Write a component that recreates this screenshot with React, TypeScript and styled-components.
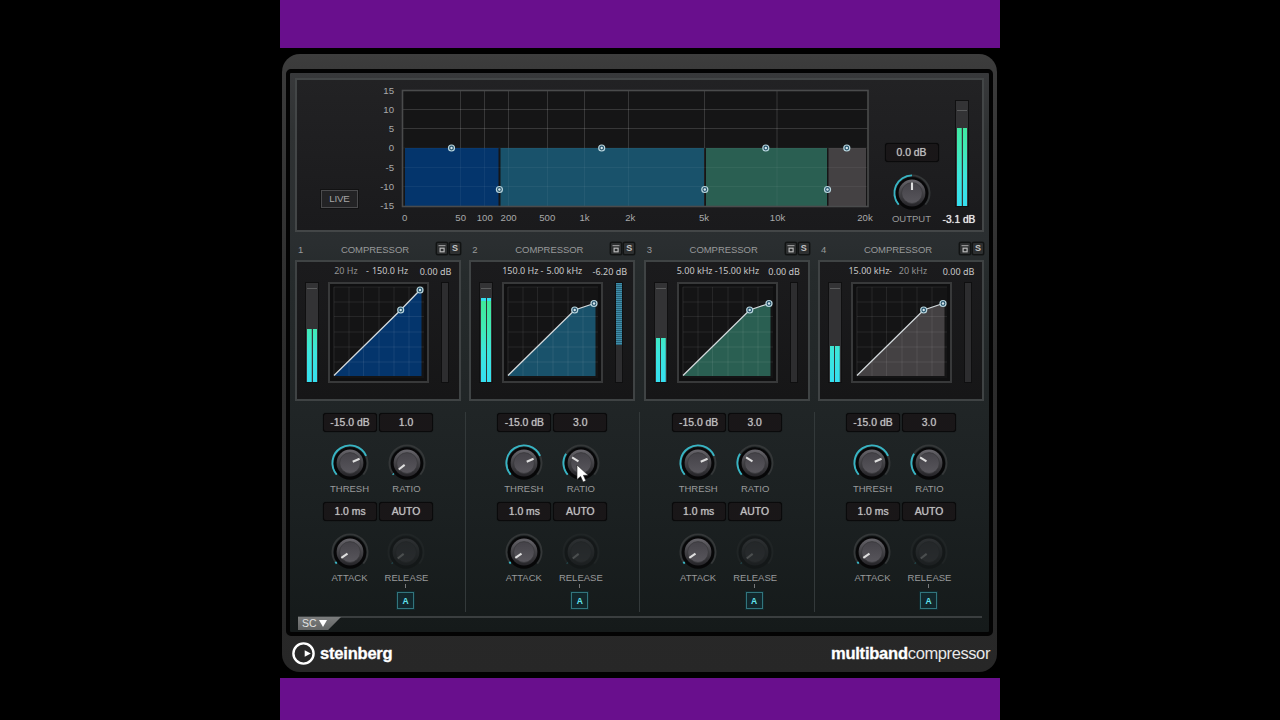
import React from "react";
import styled, { createGlobalStyle, css } from "styled-components";

const SANS = '"Liberation Sans", Arial, sans-serif';
const HUMANIST = '"Noto Sans", "Open Sans", sans-serif';

const GlobalStyle = createGlobalStyle`
  * { box-sizing: border-box; }
  html, body { margin: 0; background: #000; }
  body { font-family: ${SANS}; overflow: hidden; }
  svg { display: block; flex: none; }
`;

const Stage = styled.main`
  width: 1280px;
  height: 720px;
  background: #000;
  display: flex;
  justify-content: center;
`;

const Column = styled.div`
  width: 720px;
  height: 720px;
  display: flex;
  flex-direction: column;
  justify-content: space-between;
`;

const Stripe = styled.div<{ $height: number }>`
  height: ${(p) => p.$height}px;
  background: #690f8d;
`;

const Plugin = styled.section`
  width: 715px;
  height: 618px;
  margin: 0 0 0 2px;
  padding: 15px 4px 0;
  border-radius: 18px;
  background: linear-gradient(#3d3d3d 0, #3a3a3a 20px, #2c2c2c 300px, #272727 100%);
`;

const Face = styled.div`
  width: 707px;
  height: 567px;
  border: 4px solid #030303;
  border-radius: 5px;
  padding: 5px 5px 0;
  background: linear-gradient(#38393b 0, #2f3233 60px, #2a2e30 170px, #262b2c 200px, #202526 340px, #1b2021 440px, #151a1a 100%);
  display: flex;
  flex-direction: column;
`;

const Overview = styled.div`
  height: 154px;
  flex: none;
  border: 2px solid #434647;
  background: linear-gradient(#222224, #1a1a1c);
  display: flex;
`;

const LiveArea = styled.div`
  width: 76px;
  flex: none;
  padding: 108px 0 0 24px;
`;

const LiveButton = styled.button`
  width: 37px;
  height: 18px;
  padding: 0;
  border: 1px solid #4b4b4d;
  outline: 1px solid #121213;
  background: #232325;
  color: #a6a6a6;
  font: 9.8px/14px ${SANS};
  letter-spacing: -0.2px;
`;

const OutputArea = styled.div`
  width: 67px;
  flex: none;
  padding-top: 63px;
  display: flex;
  flex-direction: column;
  align-items: center;
`;

const OutputMeterArea = styled.div`
  width: 34px;
  flex: none;
  padding-top: 20px;
  display: flex;
  flex-direction: column;
  align-items: center;
`;

const OutputLevel = styled.div`
  margin: 6px 6px 0 0;
  font-size: 10.2px;
  line-height: 13px;
  color: #e6e6e6;
  text-shadow: 0 0 0.8px #fff;
  white-space: nowrap;
  width: 48px;
  text-align: center;
`;

const ValueBox = styled.div`
  width: 54px;
  height: 19px;
  border: 1px solid #0a0a0b;
  border-radius: 3px;
  box-shadow: 0 0 1px #000;
  background: radial-gradient(#1e1a1c 0.6px, transparent 0.9px) 0 0 / 2px 2px, #111112;
  color: #bebebe;
  font-size: 10.4px;
  line-height: 17px;
  text-align: center;
  white-space: nowrap;
  text-shadow: 0 0 0.8px #aaa;
`;

const Caption = styled.div`
  height: 13px;
  font-size: 9.5px;
  line-height: 13px;
  color: #999a9b;
  white-space: nowrap;
`;

const MeterTrack = styled.div<{ $height: number; $tick: number }>`
  width: 14px;
  height: ${(p) => p.$height}px;
  padding: 1px 1px 0;
  background: linear-gradient(#5a5b5c, #5a5b5c) 1px ${(p) => p.$tick}px / 10px 1px no-repeat, #333335;
  border: 1px solid #101011;
  display: flex;
  align-items: flex-end;
  gap: 1px;
`;

const MeterBar = styled.i<{ $level: number; $span: number }>`
  flex: 1;
  height: ${(p) => p.$level}px;
  background: linear-gradient(to top, #35dff0 0, #3ce6dc 30px, #40eab6 ${(p) => p.$span * 0.65}px, #3fe99a ${(p) => p.$span}px) bottom / 100% ${(p) => p.$span}px;
`;

const Bands = styled.div`
  display: grid;
  grid-template-columns: repeat(4, 166px);
  justify-content: space-between;
`;

const Band = styled.div`
  display: flex;
  flex-direction: column;
`;

const BandHeader = styled.header`
  height: 28px;
  padding-top: 10px;
  display: grid;
  grid-template-columns: 18px 124px 24px;
  color: #98999a;
  font-size: 9.5px;
  line-height: 15px;
`;

const BandNumber = styled.span`
  padding-left: 3px;
`;

const BandTitle = styled.span`
  text-align: center;
  letter-spacing: -0.05px;
`;

const BandButtons = styled.span`
  display: flex;
  gap: 1px;
  margin-left: -1px;
`;

const BandButton = styled.span`
  width: 12px;
  height: 13px;
  border: 1px solid #111313;
  border-radius: 2px;
  background: #2d2f30;
  box-shadow: 0 0 0 0.5px #151717;
  color: #c2c2c2;
  font: bold 9px/11px ${SANS};
  display: flex;
  align-items: center;
  justify-content: center;
`;

const BandPanel = styled.div`
  height: 141px;
  border: 2px solid #3f4344;
  background: linear-gradient(#1b1b1d, #161617);
`;

const Readout = styled.div`
  height: 20px;
  padding: 1px 0 0 29px;
  display: grid;
  grid-template-columns: 40px 3px 42px 48px;
  font: 9px/15px ${HUMANIST};
  color: #c8c8c8;
  white-space: nowrap;
`;

const Reading = styled.span<{ $dim?: boolean; $drop?: boolean }>`
  display: flex;
  justify-content: center;
  ${(p) => p.$dim && css`color: #929292;`}
  ${(p) => p.$drop && css`padding: 1px 0 0 1px;`}
`;

const BandBody = styled.div`
  display: flex;
  align-items: flex-start;
  padding-left: 8px;
`;

const CurveFrame = styled.div`
  width: 101px;
  height: 101px;
  margin-left: 9px;
  border: 2px solid #38393a;
  background: #0f0f10;
`;

const ReductionTrack = styled.div`
  width: 8px;
  height: 101px;
  margin-left: 12px;
  border: 1px solid #0f0f10;
  background: #2d2d2f;
`;

const ReductionBar = styled.i<{ $level: number }>`
  display: block;
  height: ${(p) => p.$level}px;
  background: repeating-linear-gradient(#3f8eab 0 1px, #286379 1px 2px);
`;

const Controls = styled.div<{ $last: boolean }>`
  width: 171px;
  height: 200px;
  margin-top: 11px;
  padding-left: 28px;
  border-right: 1px solid ${(p) => (p.$last ? "transparent" : "#33393a")};
  display: grid;
  grid-template-columns: 54px 54px;
  grid-template-rows: 89px 89px 22px;
  column-gap: 2px;
`;

const Control = styled.div`
  display: flex;
  flex-direction: column;
  align-items: center;
  padding-top: 1px;
`;

const KnobSlot = styled.div<{ $disabled?: boolean; $top: number }>`
  margin-top: ${(p) => p.$top}px;
  height: 40px;
  ${(p) => p.$disabled && css`opacity: 0.25;`}
`;

const DialFace = styled.div<{ $nudge: number }>`
  display: flex;
  flex-direction: column;
  align-items: center;
  padding-left: ${(p) => Math.max(p.$nudge, 0)}px;
  padding-right: ${(p) => Math.max(-p.$nudge, 0)}px;
`;

const AutoCell = styled.div`
  grid-column: 2;
  display: flex;
  flex-direction: column;
  align-items: center;
  padding-right: 1px;
`;

const AutoButton = styled.div`
  width: 17px;
  height: 17px;
  border: 1px solid #32757d;
  outline: 1px solid #11282c;
  background: #12272c;
  color: #62e4ee;
  font: bold 8.5px/16px ${SANS};
  text-align: center;
`;

const Dash = styled.span`
  width: 1px;
  height: 4px;
  margin: -6px 0 4px;
  background: #77797a;
`;

const SideChain = styled.div`
  margin: 4px 0 0 3px;
  width: 684px;
  border-top: 2px solid #3a3e3f;
`;

const SideChainTab = styled.div`
  width: 43px;
  height: 13px;
  margin-top: -1px;
  padding-left: 4px;
  background: linear-gradient(#7b7d7d, #626464);
  clip-path: polygon(0 0, 100% 0, 70% 100%, 0 100%);
  display: flex;
  align-items: center;
  gap: 2px;
  color: #e2e2e2;
  font-size: 10.5px;
  line-height: 13px;
`;

const Footer = styled.footer`
  height: 34px;
  padding: 0 3px 0 6px;
  display: flex;
  align-items: center;
  justify-content: space-between;
  color: #fff;
`;

const Brand = styled.div`
  display: flex;
  align-items: center;
  gap: 5px;
  font: bold 16.5px/20px ${SANS};
  letter-spacing: -0.2px;
  -webkit-text-stroke: 0.3px #fff;
`;

const ProductName = styled.div`
  font: 16.5px/20px ${SANS};
  letter-spacing: -0.4px;
  color: #e8e8e8;
  b {
    color: #fff;
    letter-spacing: -0.22px;
    -webkit-text-stroke: 0.3px #fff;
  }
`;

const Pointer = styled.svg`
  position: absolute;
  left: 576px;
  top: 464px;
`;

function polar(angle: number, r: number): [number, number] {
  const a = (angle * Math.PI) / 180;
  return [21 + Math.sin(a) * r, 21 - Math.cos(a) * r];
}

function arc(from: number, to: number, r: number) {
  const [x1, y1] = polar(from, r);
  const [x2, y2] = polar(to, r);
  return `M${x1} ${y1}A${r} ${r} 0 ${to - from > 180 ? 1 : 0} 1 ${x2} ${y2}`;
}

const START = -131;

function Knob({ angle }: { angle: number }) {
  const [x1, y1] = polar(angle, 3);
  const [x2, y2] = polar(angle, 10.5);
  return (
    <svg width="42" height="42" viewBox="0 0 42 42">
      <defs>
        <linearGradient id="rim" x1="0" y1="0" x2="0" y2="1">
          <stop offset="0" stopColor="#67656b" />
          <stop offset="0.5" stopColor="#434246" />
          <stop offset="1" stopColor="#252428" />
        </linearGradient>
        <linearGradient id="cap" x1="0" y1="0" x2="0" y2="1">
          <stop offset="0" stopColor="#444248" />
          <stop offset="1" stopColor="#58565c" />
        </linearGradient>
      </defs>
      <path d={arc(START, 131, 17.6)} fill="none" stroke="#343738" strokeWidth="1.8" />
      <path d={arc(START, Math.max(angle, START + 4), 17.6)} fill="none" stroke="#37b4c3" strokeWidth="1.9" />
      <circle cx="21" cy="21.5" r="16.2" fill="#070708" />
      <circle cx="21" cy="21" r="13.4" fill="url(#rim)" />
      <circle cx="21" cy="21" r="10.4" fill="url(#cap)" stroke="#37363a" strokeWidth="0.7" />
      <path d={`M${x1} ${y1}L${x2} ${y2}`} stroke="#dedede" strokeWidth="2.1" />
    </svg>
  );
}

function Node({ x, y }: { x: number; y: number }) {
  return (
    <g>
      <circle cx={x} cy={y} r="3" fill="#24526b" stroke="#b9d5dd" strokeWidth="1.2" />
      <circle cx={x} cy={y} r="1.2" fill="#d8e6ea" />
    </g>
  );
}

const SPECTRUM_BANDS = [
  { from: 405, to: 498.5, fill: "#04356c" },
  { from: 500.5, to: 704, fill: "#19526b" },
  { from: 706, to: 827, fill: "#2a5f52" },
  { from: 828.5, to: 866, fill: "#444143" },
];
const FREQ_LINES = [460.5, 484.5, 508.5, 547.5, 584.5, 628.5, 704.5, 777];
const LEVEL_LINES = [109.5, 128.5, 148, 167.5, 186.5];
const FREQ_LABELS: [string, number][] = [
  ["0", 404.7], ["50", 460.7], ["100", 484.8], ["200", 508.6], ["500", 547.3],
  ["1k", 584.5], ["2k", 630.2], ["5k", 704], ["10k", 777.6], ["20k", 865],
];
const LEVEL_LABELS: [string, number][] = [
  ["15", 91], ["10", 109.5], ["5", 128.7], ["0", 148], ["-5", 167.4], ["-10", 186.7], ["-15", 206],
];
const HANDLES: [number, number][] = [
  [451.5, 148], [601.7, 148], [765.8, 148], [846.8, 148],
  [499.4, 189.5], [704.8, 189.5], [827.5, 189.5],
];

function Spectrum() {
  return (
    <svg width="505" height="150" viewBox="373 80 505 150">
      <rect x="403" y="91" width="465" height="116" fill="#151516" />
      {SPECTRUM_BANDS.map((b) => (
        <rect key={b.from} x={b.from} y="148" width={b.to - b.from} height="58" fill={b.fill} />
      ))}
      <g stroke="#fff">
        {FREQ_LINES.map((x) => (
          <React.Fragment key={x}>
            <path d={`M${x} 91V148`} strokeOpacity="0.15" />
            <path d={`M${x} 148V206`} strokeOpacity="0.05" />
          </React.Fragment>
        ))}
        {LEVEL_LINES.map((y) => (
          <path key={y} d={`M403 ${y}H868`} strokeOpacity={y < 148 ? 0.15 : 0.05} />
        ))}
      </g>
      <rect x="402.5" y="90.5" width="465.5" height="116" fill="none" stroke="#4a4b4c" strokeWidth="1.6" />
      {HANDLES.map(([x, y]) => (
        <Node key={x} x={x} y={y} />
      ))}
      <g fill="#a8a9aa" fontSize="9.6" fontFamily={SANS}>
        {FREQ_LABELS.map(([t, x]) => (
          <text key={t} x={x} y="221" textAnchor="middle">{t}</text>
        ))}
        {LEVEL_LABELS.map(([t, y]) => (
          <text key={t} x="394" y={y + 3.3} textAnchor="end">{t}</text>
        ))}
      </g>
    </svg>
  );
}

function Curve({ fill, endY }: { fill: string; endY: number }) {
  const lines = [4, 19, 33.5, 49, 64, 79];
  return (
    <svg width="97" height="97" viewBox="0 0 97 97">
      <rect x="3" y="3" width="91" height="91" fill="#141415" />
      <path d={`M4.5 91.5L70.7 26L90 ${endY}H91.5V92H4.5Z`} fill={fill} />
      <g stroke="#fff" strokeOpacity="0.08">
        {lines.map((v) => (
          <React.Fragment key={v}>
            <path d={`M${v} 3V92`} />
            <path d={`M4 ${v - 1}H94`} />
          </React.Fragment>
        ))}
      </g>
      <path d={`M4 91.5L70.7 26L90 ${endY}`} fill="none" stroke="#d3d9dc" strokeWidth="1.3" />
      <Node x={70.7} y={26} />
      <Node x={90} y={endY} />
    </svg>
  );
}

function LevelMeter({ level, height, tick }: { level: number; height: number; tick: number }) {
  return (
    <MeterTrack $height={height} $tick={tick}>
      <MeterBar $level={level} $span={height - 20} />
      <MeterBar $level={level} $span={height - 20} />
    </MeterTrack>
  );
}

interface BandData {
  low: string;
  high: string;
  lowDim?: boolean;
  highDim?: boolean;
  gain: string;
  level: number;
  reduction: number;
  fill: string;
  endY: number;
  ratio: string;
  ratioAngle: number;
}

const BANDS: BandData[] = [
  { low: "20 Hz", high: "150.0 Hz", lowDim: true, gain: "0.00 dB", level: 53, reduction: 0, fill: "#04356c", endY: 6, ratio: "1.0", ratioAngle: -128 },
  { low: "150.0 Hz", high: "5.00 kHz", gain: "-6.20 dB", level: 84, reduction: 62, fill: "#19526b", endY: 19.5, ratio: "3.0", ratioAngle: -58 },
  { low: "5.00 kHz", high: "15.00 kHz", gain: "0.00 dB", level: 44, reduction: 0, fill: "#2a5f52", endY: 19.5, ratio: "3.0", ratioAngle: -58 },
  { low: "15.00 kHz", high: "20 kHz", highDim: true, gain: "0.00 dB", level: 36, reduction: 0, fill: "#444143", endY: 19.5, ratio: "3.0", ratioAngle: -58 },
];

interface DialProps {
  value: string;
  angle: number;
  label: string;
  disabled?: boolean;
  nudge?: number;
}

function Dial({ value, angle, label, disabled, nudge = 0 }: DialProps) {
  return (
    <Control>
      <ValueBox>{value}</ValueBox>
      <DialFace $nudge={nudge}>
        <KnobSlot $top={10} $disabled={disabled}>
          <Knob angle={angle} />
        </KnobSlot>
        <Caption>{label}</Caption>
      </DialFace>
    </Control>
  );
}

function BandStrip({ band, index }: { band: BandData; index: number }) {
  return (
    <Band>
      <BandHeader>
        <BandNumber>{index + 1}</BandNumber>
        <BandTitle>COMPRESSOR</BandTitle>
        <BandButtons>
          <BandButton>
            <svg width="8" height="8" viewBox="0 0 8 8" fill="none" stroke="#b9b9b9">
              <path d="M0.5 0.7H7.5" strokeWidth="0.9" />
              <rect x="2.1" y="3.2" width="4" height="3.6" strokeWidth="1.2" />
            </svg>
          </BandButton>
          <BandButton>S</BandButton>
        </BandButtons>
      </BandHeader>
      <BandPanel>
        <Readout>
          <Reading $dim={band.lowDim}>{band.low}</Reading>
          <Reading>-</Reading>
          <Reading $dim={band.highDim}>{band.high}</Reading>
          <Reading $drop>{band.gain}</Reading>
        </Readout>
        <BandBody>
          <LevelMeter level={band.level} height={101} tick={5} />
          <CurveFrame>
            <Curve fill={band.fill} endY={band.endY} />
          </CurveFrame>
          <ReductionTrack>
            <ReductionBar $level={band.reduction} />
          </ReductionTrack>
        </BandBody>
      </BandPanel>
      <Controls $last={index === 3}>
        <Dial value="-15.0 dB" angle={66} label="THRESH" nudge={-1} />
        <Dial value={band.ratio} angle={band.ratioAngle} label="RATIO" nudge={1} />
        <Dial value="1.0 ms" angle={-124} label="ATTACK" nudge={-1} />
        <Dial value="AUTO" angle={-128} label="RELEASE" nudge={1} disabled />
        <AutoCell>
          <Dash />
          <AutoButton>A</AutoButton>
        </AutoCell>
      </Controls>
    </Band>
  );
}

export default function App() {
  return (
    <Stage>
      <GlobalStyle />
      <Column>
        <Stripe $height={48} />
        <Plugin>
          <Face>
            <Overview>
              <LiveArea>
                <LiveButton>LIVE</LiveButton>
              </LiveArea>
              <Spectrum />
              <OutputArea>
                <ValueBox>0.0 dB</ValueBox>
                <KnobSlot $top={10}>
                  <Knob angle={0} />
                </KnobSlot>
                <Caption>OUTPUT</Caption>
              </OutputArea>
              <OutputMeterArea>
                <LevelMeter level={78} height={107} tick={9} />
                <OutputLevel>-3.1 dB</OutputLevel>
              </OutputMeterArea>
            </Overview>
            <Bands>
              {BANDS.map((band, i) => (
                <BandStrip key={i} band={band} index={i} />
              ))}
            </Bands>
            <SideChain>
              <SideChainTab>
                SC
                <svg width="8" height="7" viewBox="0 0 8 7">
                  <path d="M0 0H8L4 7Z" fill="#fff" />
                </svg>
              </SideChainTab>
            </SideChain>
          </Face>
          <Footer>
            <Brand>
              <svg width="23" height="23" viewBox="0 0 23 23">
                <circle cx="11.5" cy="11.5" r="10.1" fill="none" stroke="#fff" strokeWidth="2.4" />
                <path d="M12.7 8.2L18.8 11.5L12.7 14.8Z" fill="#fff" />
              </svg>
              steinberg
            </Brand>
            <ProductName>
              <b>multiband</b>compressor
            </ProductName>
          </Footer>
        </Plugin>
        <Stripe $height={42} />
      </Column>
      <Pointer width="15" height="20" viewBox="0 0 15 20">
        <path d="M1 1V15.5L4.6 12.4L7.1 18L9.9 16.8L7.4 11.3H12.2Z" fill="#fff" stroke="#222" strokeWidth="0.6" />
      </Pointer>
    </Stage>
  );
}
